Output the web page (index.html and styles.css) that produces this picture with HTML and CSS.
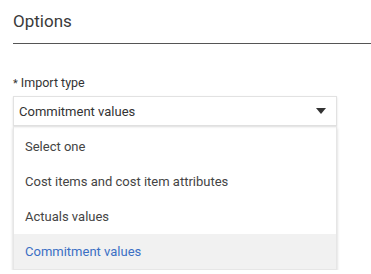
FILE: index.html
```html
<!DOCTYPE html>
<html lang="en">
<head>
  <meta charset="UTF-8">
  <title>Options</title>
  <link rel="stylesheet" href="styles.css">
</head>
<body>

  <!-- Section heading -->
  <div class="section-title">Options</div>

  <!-- Import type field -->
  <div class="field">
    <label class="field-label"><span class="req">*</span> Import type</label>

    <div class="select">
      <span class="select-value">Commitment values</span>
      <svg class="caret" width="10" height="6" viewBox="0 0 10 6">
        <path d="M0 0 L10 0 L5 6 Z" fill="#333"/>
      </svg>
    </div>

    <!-- Open dropdown list -->
    <ul class="options">
      <li>Select one</li>
      <li>Cost items and cost item attributes</li>
      <li>Actuals values</li>
      <li class="selected">Commitment values</li>
    </ul>
  </div>

</body>
</html>
```

FILE: styles.css
```css
/* General page */
body {
  margin: 0;
  padding: 11px 0 0 13px;
  background-color: white;
  color: #333;
  font-family: Roboto, "Liberation Sans", sans-serif;
}

/* Heading with underline */
.section-title {
  font-size: 17px;
  line-height: 20px;
  padding-bottom: 12px;
  border-bottom: 1px solid #555;
  color: #3a3a3a;
}

/* Field block */
.field {
  margin-top: 32px;
  width: 324px;
}

.field-label {
  display: block;
  font-size: 12.5px;
  line-height: 14px;
  color: #333;
  margin-bottom: 5px;
}

.req {
  font-size: 11px;
}

/* Closed select box */
.select {
  height: 28px;
  border: 1px solid #e2e2e2;
  box-shadow: 0 1px 2px rgba(0, 0, 0, 0.12);
  display: flex;
  align-items: center;
  justify-content: space-between;
  padding: 0 10px 0 5px;
  font-size: 13px;
  color: #333;
}

.caret {
  display: block;
}

/* Dropdown list */
.options {
  list-style: none;
  margin: 0;
  padding: 2px 0 0 0;
  border: 1px solid #e6e6e6;
  box-shadow: 0 2px 3px rgba(0, 0, 0, 0.2);
}

.options li {
  height: 35px;
  line-height: 35px;
  padding-left: 11px;
  font-size: 13px;
  color: #444;
}

.options li.selected {
  background-color: #f1f1f1;
  color: #3b6fc4;
}
```
